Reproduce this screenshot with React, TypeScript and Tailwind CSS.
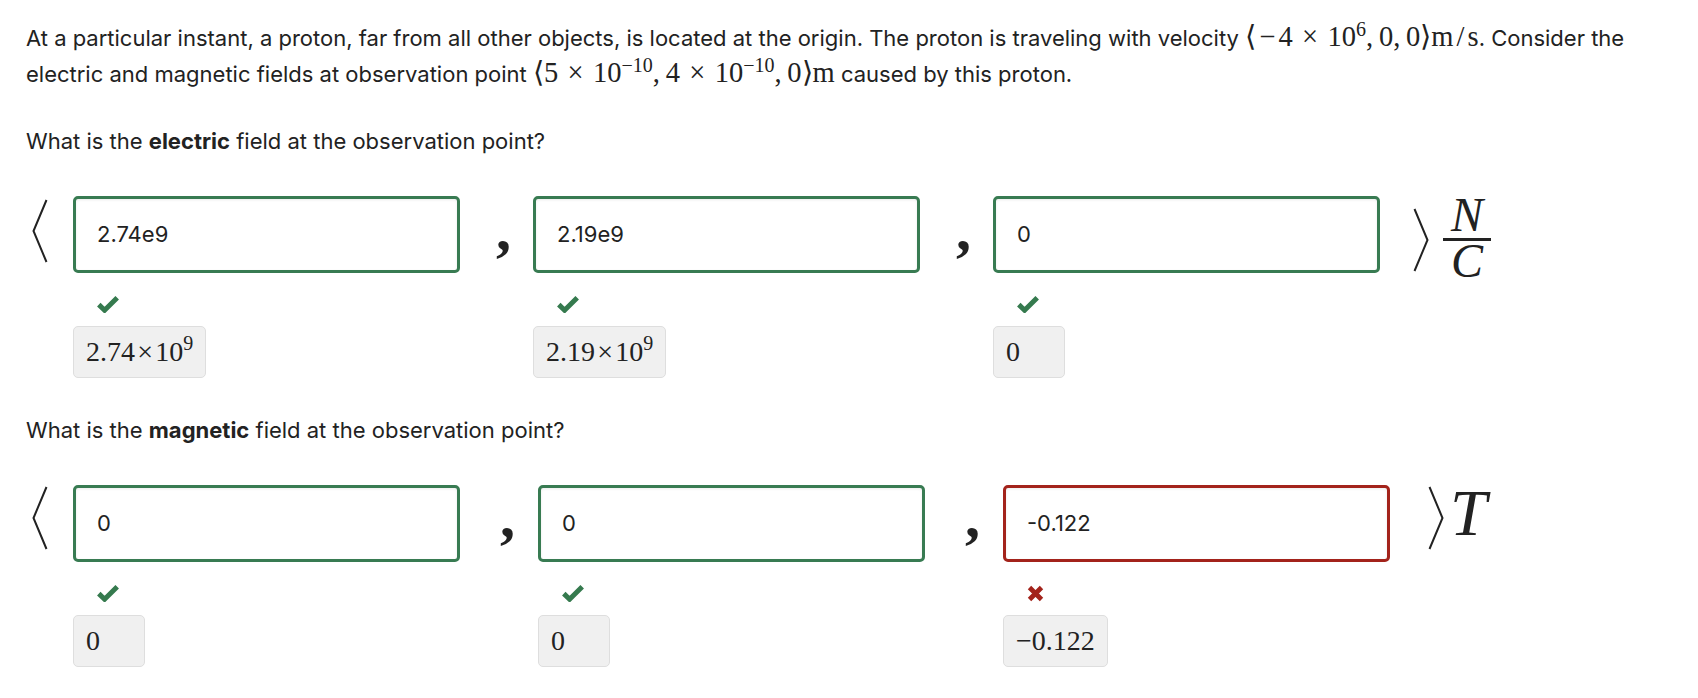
import type { ReactNode } from 'react';

type Status = 'ok' | 'bad';

// serif span used for the math bits; zero line-height so it never grows the text line
function M({ children }: { children: ReactNode }) {
  return <span className="font-['Liberation_Serif',serif] text-[28.5px] leading-[0]">{children}</span>;
}

function Sup({ children }: { children: ReactNode }) {
  return <span className="text-[20px] align-[0.5em] leading-[0]">{children}</span>;
}

function Times() {
  return <span className="mx-[0.33em]">×</span>;
}

function Sep() {
  return <span className="mr-[0.2em]">,</span>;
}

function LeftAngle() {
  return (
    <svg width="16" height="64" viewBox="0 0 16 64" className="shrink-0">
      <polyline points="14.5,1 1.5,32 14.5,63" fill="none" stroke="#222" strokeWidth="2" />
    </svg>
  );
}

function RightAngle() {
  return (
    <svg width="16" height="64" viewBox="0 0 16 64" className="shrink-0">
      <polyline points="1.5,1 14.5,32 1.5,63" fill="none" stroke="#222" strokeWidth="2" />
    </svg>
  );
}

function CheckMark() {
  return (
    <svg width="22" height="17" viewBox="0 0 22 17">
      <path d="M1.8 8.6 L7.6 14.2 L20.2 1.8" fill="none" stroke="#357a4e" strokeWidth="5" strokeLinejoin="miter" />
    </svg>
  );
}

function CrossMark() {
  return (
    <svg width="17" height="17" viewBox="0 0 17 17">
      <path d="M2.5 2.5 L14.5 14.5 M14.5 2.5 L2.5 14.5" fill="none" stroke="#a3231b" strokeWidth="4.8" />
    </svg>
  );
}

function Field({ value, status, answer }: { value: string; status: Status; answer: ReactNode }) {
  const border = status === 'ok' ? 'border-[#387b52]' : 'border-[#a3231b]';
  return (
    <div className="flex w-[387px] shrink-0 flex-col">
      <div
        className={`flex h-[77px] items-center rounded-[5px] border-[3px] ${border} bg-white pl-[21px] text-[22px] text-[#222] shadow-[inset_0_1px_3px_rgba(0,0,0,0.08)]`}
      >
        {value}
      </div>
      <div className="mt-[23px] flex h-[17px] items-center pl-[24px]">
        {status === 'ok' ? <CheckMark /> : <CrossMark />}
      </div>
      <div className="mt-[13px] flex">
        <div className="flex h-[52px] min-w-[72px] items-center rounded-[5px] border-[1.5px] border-[#dedede] bg-[#f0f0f0] px-[12px] font-['Liberation_Serif',serif] text-[28px] text-[#222]">
          {answer}
        </div>
      </div>
    </div>
  );
}

function Comma({ width, pad }: { width: string; pad: string }) {
  return (
    <div className={`${width} ${pad} shrink-0 font-['Liberation_Serif',serif] text-[60px] font-bold leading-none text-[#222]`}>
      ,
    </div>
  );
}

function Sci({ mant, exp }: { mant: string; exp: string }) {
  return (
    <span>
      {mant}
      <span className="mx-[0.08em]">×</span>10<span className="text-[20px] align-[0.55em] leading-[0]">{exp}</span>
    </span>
  );
}

export default function App() {
  return (
    <div className="min-h-screen bg-white pl-[26px] pt-[20px] font-['Inter',sans-serif] text-[22px] text-[#222]">
      <p className="leading-[36px]">
        At a particular instant, a proton, far from all other objects, is located at the origin. The proton is traveling
        with velocity{' '}
        <M>
          ⟨<span className="px-[0.11em]">−</span>4<Times />10<Sup>6</Sup>
          <Sep />0<Sep />0⟩m<span className="px-[0.11em]">/</span>s
        </M>
        . Consider the
        <br />
        electric and magnetic fields at observation point{' '}
        <M>
          ⟨5<Times />10<Sup>−10</Sup>
          <Sep />4<Times />10<Sup>−10</Sup>
          <Sep />0⟩m
        </M>{' '}
        caused by this proton.
      </p>

      <p className="mt-[31px] leading-[36px]">
        What is the <b className="font-bold">electric</b> field at the observation point?
      </p>

      {/* electric field row */}
      <div className="mt-[37px] flex items-start">
        <div className="w-[47px] shrink-0 pl-[6px] pt-[3px]">
          <LeftAngle />
        </div>
        <Field value="2.74e9" status="ok" answer={<Sci mant="2.74" exp="9" />} />
        <Comma width="w-[73px]" pad="pl-[36px] pt-[4px]" />
        <Field value="2.19e9" status="ok" answer={<Sci mant="2.19" exp="9" />} />
        <Comma width="w-[73px]" pad="pl-[36px] pt-[4px]" />
        <Field value="0" status="ok" answer="0" />
        <div className="ml-[33px] flex items-start">
          <div className="pt-[12px]">
            <RightAngle />
          </div>
          <div className="ml-[14px] flex flex-col items-center font-['Liberation_Serif',serif] italic">
            <span className="text-[48px] leading-[38px]">N</span>
            <div className="mt-[4px] h-[3px] w-[48px] bg-[#222]" />
            <span className="mt-[1px] text-[48px] leading-[38px]">C</span>
          </div>
        </div>
      </div>

      <p className="mt-[34px] leading-[36px]">
        What is the <b className="font-bold">magnetic</b> field at the observation point?
      </p>

      {/* magnetic field row */}
      <div className="mt-[37px] flex items-start">
        <div className="w-[47px] shrink-0 pl-[6px] pt-[1px]">
          <LeftAngle />
        </div>
        <Field value="0" status="ok" answer="0" />
        <Comma width="w-[78px]" pad="pl-[40px] pt-[2px]" />
        <Field value="0" status="ok" answer="0" />
        <Comma width="w-[78px]" pad="pl-[40px] pt-[2px]" />
        <Field value="-0.122" status="bad" answer="−0.122" />
        <div className="ml-[38px] flex items-start">
          <div className="pt-[1px]">
            <RightAngle />
          </div>
          <span className="ml-[6px] font-['Liberation_Serif',serif] text-[66px] italic leading-[55px]">T</span>
        </div>
      </div>
    </div>
  );
}
